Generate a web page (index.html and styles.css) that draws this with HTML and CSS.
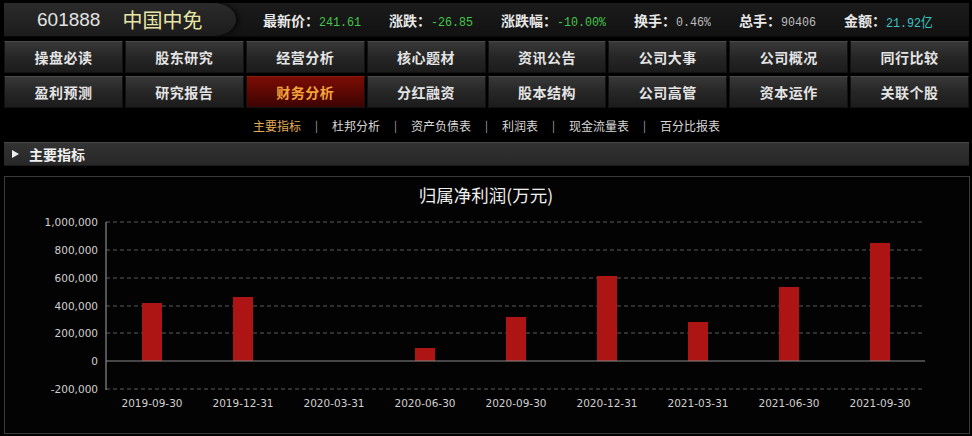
FILE: index.html
```html
<!DOCTYPE html>
<html lang="zh-CN">
<head>
<meta charset="utf-8">
<title>601888 中国中免 财务分析</title>
<link rel="stylesheet" href="styles.css">
</head>
<body>
<div class="page">
  <header class="quote">
    <div class="quote-id">
      <span class="code">601888</span>
      <span class="name">中国中免</span>
    </div>
    <div class="stats">
      <span class="stat"><b>最新价：</b><i class="up">241.61</i></span>
      <span class="stat"><b>涨跌：</b><i class="up">-26.85</i></span>
      <span class="stat"><b>涨跌幅：</b><i class="up">-10.00%</i></span>
      <span class="stat"><b>换手：</b><i>0.46%</i></span>
      <span class="stat"><b>总手：</b><i>90406</i></span>
      <span class="stat"><b>金额：</b><i class="cyan">21.92亿</i></span>
    </div>
  </header>

  <nav class="menu">
    <a class="cell">操盘必读</a>
    <a class="cell">股东研究</a>
    <a class="cell">经营分析</a>
    <a class="cell">核心题材</a>
    <a class="cell">资讯公告</a>
    <a class="cell">公司大事</a>
    <a class="cell">公司概况</a>
    <a class="cell">同行比较</a>
    <a class="cell">盈利预测</a>
    <a class="cell">研究报告</a>
    <a class="cell active">财务分析</a>
    <a class="cell">分红融资</a>
    <a class="cell">股本结构</a>
    <a class="cell">公司高管</a>
    <a class="cell">资本运作</a>
    <a class="cell">关联个股</a>
  </nav>

  <div class="subtabs">
    <span class="sub on">主要指标</span><span class="sep">|</span>
    <span class="sub">杜邦分析</span><span class="sep">|</span>
    <span class="sub">资产负债表</span><span class="sep">|</span>
    <span class="sub">利润表</span><span class="sep">|</span>
    <span class="sub">现金流量表</span><span class="sep">|</span>
    <span class="sub">百分比报表</span>
  </div>

  <div class="section-bar"><span class="tri"></span><span class="section-title">主要指标</span></div>

  <div class="chart-panel">
    <svg class="chart" width="964" height="256" viewBox="0 0 964 256">
      <text class="title" x="481" y="25" text-anchor="middle">归属净利润(万元)</text>
      <g class="grid">
        <line x1="101" y1="45" x2="920" y2="45"/>
        <line x1="101" y1="73" x2="920" y2="73"/>
        <line x1="101" y1="101" x2="920" y2="101"/>
        <line x1="101" y1="129" x2="920" y2="129"/>
        <line x1="101" y1="156" x2="920" y2="156"/>
        <line x1="101" y1="212" x2="920" y2="212"/>
      </g>
      <g class="ylab" text-anchor="end">
        <text x="93" y="49">1,000,000</text>
        <text x="93" y="77">800,000</text>
        <text x="93" y="105">600,000</text>
        <text x="93" y="133">400,000</text>
        <text x="93" y="160">200,000</text>
        <text x="93" y="188">0</text>
        <text x="93" y="216">-200,000</text>
      </g>
      <g class="bars">
        <rect x="137" y="126" width="20" height="58"/>
        <rect x="228" y="120" width="20" height="64"/>
        <rect x="410" y="171" width="20" height="13"/>
        <rect x="501" y="140" width="20" height="44"/>
        <rect x="592" y="99" width="20" height="85"/>
        <rect x="683" y="145" width="20" height="39"/>
        <rect x="774" y="110" width="20" height="74"/>
        <rect x="865" y="66" width="20" height="118"/>
      </g>
      <line class="axis" x1="101" y1="45" x2="101" y2="213"/>
      <line class="axis" x1="101" y1="184" x2="920" y2="184"/>
      <g class="xlab" text-anchor="middle">
        <text x="147" y="230">2019-09-30</text>
        <text x="238" y="230">2019-12-31</text>
        <text x="329" y="230">2020-03-31</text>
        <text x="420" y="230">2020-06-30</text>
        <text x="511" y="230">2020-09-30</text>
        <text x="602" y="230">2020-12-31</text>
        <text x="693" y="230">2021-03-31</text>
        <text x="784" y="230">2021-06-30</text>
        <text x="875" y="230">2021-09-30</text>
      </g>
    </svg>
  </div>
</div>
</body>
</html>
```
FILE: styles.css
```css
* { box-sizing: border-box; }
html, body { margin: 0; padding: 0; background: #000; }
body {
  font-family: "Noto Sans CJK SC", "Noto Sans", sans-serif;
  color: #ddd;
  width: 972px;
  height: 436px;
  overflow: hidden;
}
.page { padding: 3px 3px 0 4px; }

/* quote header */
.quote {
  display: flex;
  align-items: center;
  height: 34px;
  background: linear-gradient(#1b1b1b, #121212);
  border-bottom: 1px solid #0a0a0a;
}
.quote-id {
  display: flex;
  align-items: center;
  height: 100%;
  width: 232px;
  padding-left: 33px;
  background: linear-gradient(#2b2b2b, #1c1c1c);
  border-radius: 0 24px 24px 0 / 0 17px 17px 0;
  box-shadow: 3px 0 4px rgba(0,0,0,0.6);
}
.code {
  font-family: "Liberation Sans", sans-serif;
  font-size: 19px;
  color: #e2e2e2;
}
.name {
  margin-left: 22px;
  font-size: 20px;
  color: #e8e6a6;
}
.stats {
  display: flex;
  align-items: center;
  margin-left: 27px;
}
.stat { display: flex; align-items: baseline; margin-right: 28px; }
.stat b {
  font-weight: 700;
  font-size: 14px;
  color: #e8e8e8;
}
.stat i {
  font-style: normal;
  font-family: "Liberation Mono", "DejaVu Sans Mono", monospace;
  font-size: 11.67px;
  color: #bdbdbd;
  transform: scaleY(1.15);
}
.stat i.up { color: #44c74a; }
.stat i.cyan { color: #3cc6c6; }

/* menu */
.menu {
  margin-top: 4px;
  display: grid;
  grid-template-columns: repeat(8, 1fr);
  column-gap: 2px;
  row-gap: 3px;
  width: 965px;
}
.cell {
  display: flex;
  align-items: center;
  justify-content: center;
  height: 32px;
  background: linear-gradient(#383838, #262626 50%, #1c1c1c);
  border: 1px solid #121212;
  border-top-color: #4a4a4a;
  color: #e4e4e4;
  font-size: 14px;
  font-weight: 700;
  letter-spacing: 0.5px;
}
.cell.active {
  background: linear-gradient(#7a0d04, #560703 60%, #3d0402);
  border-top-color: #8a1a0a;
  color: #f4a43a;
}

/* sub tabs */
.subtabs {
  display: flex;
  justify-content: center;
  align-items: center;
  height: 34px;
  width: 965px;
  font-size: 12px;
  color: #d8d8d8;
}
.sub.on { color: #e3ac55; }
.sep { margin: 0 14px; color: #aaa; font-size: 11px; }

/* section bar */
.section-bar {
  display: flex;
  align-items: center;
  height: 24px;
  width: 965px;
  background: linear-gradient(#333, #272727);
  border-top: 1px solid #474747;
  border-bottom: 1px solid #1a1a1a;
  padding-left: 8px;
}
.tri {
  width: 0; height: 0;
  border-left: 7px solid #eee;
  border-top: 4px solid transparent;
  border-bottom: 4px solid transparent;
  margin-right: 10px;
}
.section-title { font-size: 14px; font-weight: 700; color: #f0f0f0; }

/* chart */
.chart-panel {
  margin-top: 10px;
  width: 966px;
  height: 258px;
  border: 1px solid #3a3a3a;
  background: #030303;
}
.chart { display: block; }
.chart .title {
  font-family: "Noto Sans CJK SC", sans-serif;
  font-size: 17.5px;
  fill: #efefef;
}
.chart .grid line { stroke: #5c5c5c; stroke-width: 1; stroke-dasharray: 4 3; }
.chart .axis { stroke: #8a8a8a; stroke-width: 1.2; }
.chart .bars rect { fill: #ad1514; }
.chart .ylab text, .chart .xlab text {
  font-family: "DejaVu Sans", sans-serif;
  font-size: 10.5px;
  fill: #d0d0d0;
}
```
